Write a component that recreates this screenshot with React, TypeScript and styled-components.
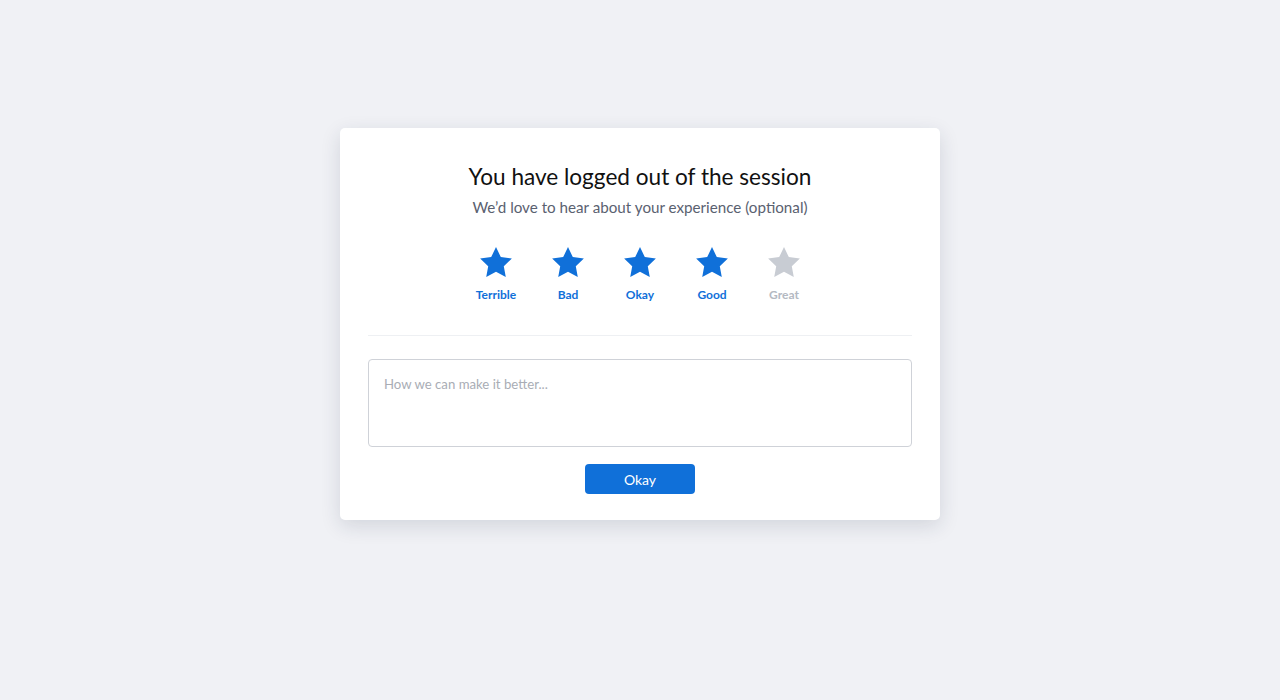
import React, { useState } from 'react';
import styled, { createGlobalStyle } from 'styled-components';

const GlobalStyle = createGlobalStyle`
    html, body {
        margin: 0;
        padding: 0;
        background: #f0f1f5;
        font-family: 'Lato', 'Open Sans', sans-serif;
    }
`;

const labels = ['Terrible', 'Bad', 'Okay', 'Good', 'Great'];

function Star({ filled }: { filled: boolean }) {
    return (
        <svg width="34" height="33" viewBox="0 0 24 23">
            <path
                d="M12 0.6l3.4 7.1 7.8 1-5.7 5.4 1.4 7.7L12 18.1l-6.9 3.7 1.4-7.7L0.8 8.7l7.8-1z"
                fill={filled ? '#1070d9' : '#c8ccd3'}
            />
        </svg>
    );
}

function App() {
    const [rating, setRating] = useState(4);
    const [text, setText] = useState('');

    return (
        <>
            <GlobalStyle />
            <Page>
                <Card>
                    <Title>You have logged out of the session</Title>
                    <Subtitle>We’d love to hear about your experience (optional)</Subtitle>
                    <Stars>
                        {labels.map((label, i) => (
                            <StarButton
                                key={label}
                                $active={i < rating}
                                onClick={() => setRating(i + 1)}
                            >
                                <Star filled={i < rating} />
                                <span>{label}</span>
                            </StarButton>
                        ))}
                    </Stars>
                    <Divider />
                    <Feedback
                        placeholder="How we can make it better..."
                        value={text}
                        onChange={(e) => setText(e.target.value)}
                    />
                    <SubmitButton>Okay</SubmitButton>
                </Card>
            </Page>
        </>
    );
}

export default App;

const Page = styled.div`
    height: 700px;
    display: flex;
    justify-content: center;
    align-items: flex-start;
    padding-top: 128px;
    box-sizing: border-box;
`;

const Card = styled.div`
    width: 600px;
    box-sizing: border-box;
    background: #fff;
    border-radius: 5px;
    box-shadow: 0 6px 20px rgba(30, 40, 70, 0.14);
    padding: 34px 28px 26px;
    display: flex;
    flex-direction: column;
    align-items: center;
`;

const Title = styled.h1`
    margin: 0;
    font-size: 22.6px;
    font-weight: 400;
    line-height: 30px;
    color: #111;
`;

const Subtitle = styled.p`
    margin: 4px 0 0;
    font-size: 15.2px;
    line-height: 22px;
    color: #5a6170;
`;

const Stars = styled.div`
    display: flex;
    gap: 22px;
    margin-top: 28px;
`;

const StarButton = styled.button<{ $active: boolean }>`
    width: 50px;
    padding: 0;
    border: none;
    background: none;
    cursor: pointer;
    display: flex;
    flex-direction: column;
    align-items: center;
    gap: 8px;

    span {
        font-family: 'Lato', 'Open Sans', sans-serif;
        font-size: 12px;
        font-weight: 700;
        line-height: 15px;
        color: ${({ $active }) => ($active ? '#1070d9' : '#b4b9c2')};
    }
`;

const Divider = styled.div`
    align-self: stretch;
    height: 1px;
    background: #eef0f3;
    margin-top: 33px;
`;

const Feedback = styled.textarea`
    align-self: stretch;
    height: 88px;
    box-sizing: border-box;
    margin-top: 23px;
    padding: 16px 15px;
    border: 1px solid #cfd2d8;
    border-radius: 4px;
    resize: none;
    font-family: 'Lato', 'Open Sans', sans-serif;
    font-size: 13.2px;
    color: #333;
    outline: none;

    &::placeholder {
        color: #a9adb5;
    }
`;

const SubmitButton = styled.button`
    margin-top: 17px;
    width: 110px;
    height: 30px;
    border: none;
    border-radius: 4px;
    background: #1070d9;
    color: #fff;
    font-family: 'Lato', 'Open Sans', sans-serif;
    font-size: 14px;
    cursor: pointer;
`;
